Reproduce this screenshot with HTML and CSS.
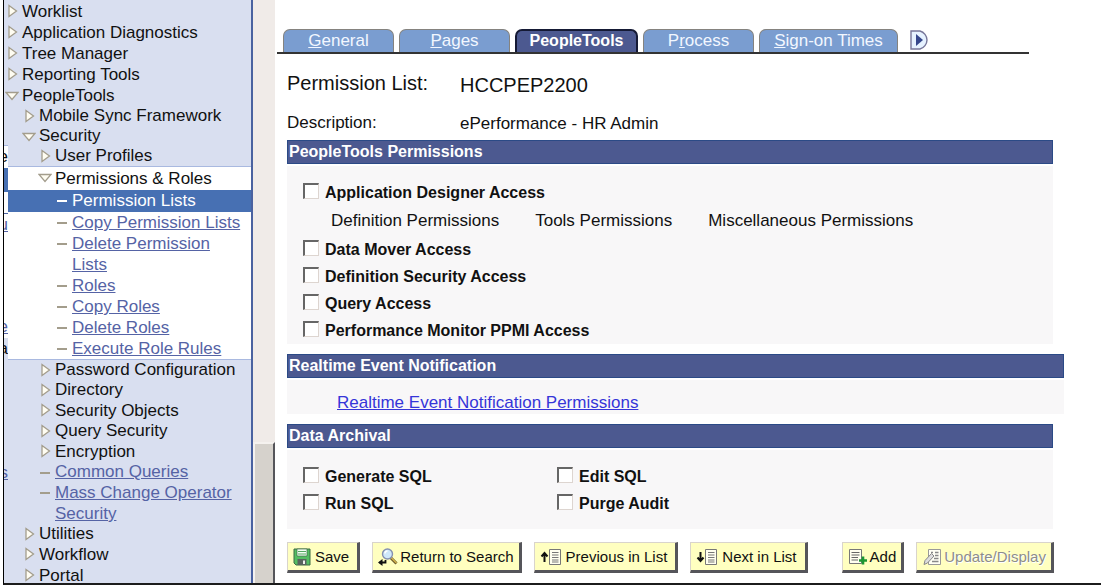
FILE: index.html
```html
<!DOCTYPE html>
<html lang="en">
<head>
    <meta charset="UTF-8">
    <meta name="viewport" content="width=device-width, initial-scale=1.0">
    <title>Permission Lists</title>
    <link rel="stylesheet" href="styles.css">
</head>
<body>
    <svg class="defs" aria-hidden="true">
        <symbol id="closed" viewBox="0 0 10 14">
            <path d="M1 1.5V12.5L8.5 7Z" fill="#fffdf2" stroke="#a39d8c" stroke-width="1.3"/>
        </symbol>
        <symbol id="open" viewBox="0 0 14 10">
            <path d="M1 1.5H13L7 8.5Z" fill="#fffdf2" stroke="#a39d8c" stroke-width="1.3"/>
        </symbol>
    </svg>
    <div id="frame">
        <div id="sidebar">
            <div id="strip" aria-hidden="true">
                <div class="s-top"></div>
                <div class="s-white">e</div>
                <div class="s-blue"></div>
                <div class="s-white s-line"></div>
                <div class="s-link">u</div>
                <div class="s-link s-gap">e</div>
                <div class="s-text">a</div>
                <div class="s-low">s</div>
            </div>
            <nav id="menu">
                <ul class="lvl1">
                    <li><span class="row"><svg class="closed"><use href="#closed"/></svg>Worklist</span></li>
                    <li><span class="row"><svg class="closed"><use href="#closed"/></svg>Application Diagnostics</span></li>
                    <li><span class="row"><svg class="closed"><use href="#closed"/></svg>Tree Manager</span></li>
                    <li><span class="row"><svg class="closed"><use href="#closed"/></svg>Reporting Tools</span></li>
                    <li><span class="row"><svg class="open"><use href="#open"/></svg>PeopleTools</span>
                        <ul class="lvl2">
                            <li><span class="row short"><svg class="closed"><use href="#closed"/></svg>Mobile Sync Framework</span></li>
                            <li><span class="row short"><svg class="open"><use href="#open"/></svg>Security</span>
                                <ul class="lvl3">
                                    <li><span class="row short"><svg class="closed"><use href="#closed"/></svg>User Profiles</span></li>
                                    <li class="opened"><span class="row head"><svg class="open"><use href="#open"/></svg>Permissions &amp; Roles</span>
                                        <ul class="lvl4">
                                            <li><span class="row dash selected">Permission Lists</span></li>
                                            <li><span class="row dash"><a href="#">Copy Permission Lists</a></span></li>
                                            <li><span class="row dash"><a href="#">Delete Permission<br>Lists</a></span></li>
                                            <li><span class="row dash"><a href="#">Roles</a></span></li>
                                            <li><span class="row dash"><a href="#">Copy Roles</a></span></li>
                                            <li><span class="row dash"><a href="#">Delete Roles</a></span></li>
                                            <li><span class="row dash"><a href="#">Execute Role Rules</a></span></li>
                                        </ul>
                                    </li>
                                    <li><span class="row short"><svg class="closed"><use href="#closed"/></svg>Password Configuration</span></li>
                                    <li><span class="row short"><svg class="closed"><use href="#closed"/></svg>Directory</span></li>
                                    <li><span class="row"><svg class="closed"><use href="#closed"/></svg>Security Objects</span></li>
                                    <li><span class="row short"><svg class="closed"><use href="#closed"/></svg>Query Security</span></li>
                                    <li><span class="row"><svg class="closed"><use href="#closed"/></svg>Encryption</span></li>
                                    <li><span class="row short dash"><a href="#">Common Queries</a></span></li>
                                    <li><span class="row dash"><a href="#">Mass Change Operator<br>Security</a></span></li>
                                </ul>
                            </li>
                            <li><span class="row short"><svg class="closed"><use href="#closed"/></svg>Utilities</span></li>
                            <li><span class="row"><svg class="closed"><use href="#closed"/></svg>Workflow</span></li>
                            <li><span class="row"><svg class="closed"><use href="#closed"/></svg>Portal</span></li>
                        </ul>
                    </li>
                </ul>
            </nav>
        </div>
        <div id="scroll" aria-hidden="true">
            <div class="track"></div>
            <div class="thumb"></div>
        </div>
        <main id="content">
            <nav id="tabs">
                <a href="#" class="tab"><u>G</u>eneral</a>
                <a href="#" class="tab"><u>P</u>ages</a>
                <a href="#" class="tab active">PeopleTools</a>
                <a href="#" class="tab">P<u>r</u>ocess</a>
                <a href="#" class="tab wide"><u>S</u>ign-on Times</a>
                <a href="#" class="next" aria-label="Next tabs">
                    <svg width="18" height="20" viewBox="0 0 18 20">
                        <path d="M1 1H10C14 2 17 6 17 10S14 18 10 19H1Z" fill="#e6f2ff" stroke="#77779a" stroke-width="1.4"/>
                        <path d="M6 4V16L13 10Z" fill="#35478c"/>
                    </svg>
                </a>
            </nav>
            <dl id="info">
                <dt class="big">Permission List:</dt>
                <dd class="big">HCCPEP2200</dd>
                <dt>Description:</dt>
                <dd>ePerformance - HR Admin</dd>
            </dl>
            <section class="group">
                <h2>PeopleTools Permissions</h2>
                <div class="body">
                    <label><input type="checkbox">Application Designer Access</label>
                    <div class="sub">
                        <span>Definition Permissions</span>
                        <span>Tools Permissions</span>
                        <span>Miscellaneous Permissions</span>
                    </div>
                    <label><input type="checkbox">Data Mover Access</label>
                    <label><input type="checkbox">Definition Security Access</label>
                    <label><input type="checkbox">Query Access</label>
                    <label><input type="checkbox">Performance Monitor PPMI Access</label>
                </div>
            </section>
            <section class="group event">
                <h2>Realtime Event Notification</h2>
                <div class="body">
                    <a href="#">Realtime Event Notification Permissions</a>
                </div>
            </section>
            <section class="group archive">
                <h2>Data Archival</h2>
                <div class="body">
                    <label><input type="checkbox">Generate SQL</label>
                    <label><input type="checkbox">Edit SQL</label>
                    <label><input type="checkbox">Run SQL</label>
                    <label><input type="checkbox">Purge Audit</label>
                </div>
            </section>
            <div id="buttons">
                <button type="button" class="roomy">
                    <svg width="18" height="18" viewBox="0 0 18 18">
                        <path d="M1 1H17V17H3L1 15Z" fill="#54bd62" stroke="#3c6b45"/>
                        <path d="M4 1H14V8H4Z" fill="#f4fff4" stroke="#3c6b45" stroke-width=".7"/>
                        <path d="M5 3.5H13M5 6H13" stroke="#54a860"/>
                        <path d="M4.500 11H13.500V17H4.500Z" fill="#59625e"/>
                        <path d="M10 12.500H12V16H10Z" fill="#eee"/>
                    </svg>
                    Save
                </button>
                <button type="button">
                    <svg width="20" height="18" viewBox="0 0 20 18">
                        <path d="M12.500 9.500L18.500 15.500" stroke="#6a5a2c" stroke-width="3"/>
                        <path d="M13 9.500L18.500 15" stroke="#d8b850" stroke-width="1.200"/>
                        <circle cx="9.500" cy="6" r="5" fill="#cfe8fb" stroke="#8590b0" stroke-width="1.400"/>
                        <path d="M7 5.500C7 4 8 3 9.500 3" fill="none" stroke="#fff" stroke-width="1.500"/>
                        <path d="M1.500 14.500H7.500V12" fill="none" stroke="#111" stroke-width="1.800"/>
                        <path d="M0 14.500L4.500 11V18Z" fill="#111"/>
                    </svg>
                    Return to Search
                </button>
                <button type="button" class="roomy">
                    <svg width="22" height="18" viewBox="0 0 22 18">
                        <path d="M4.500 14V5M1.500 8.500L4.500 5L7.500 8.500" fill="none" stroke="#111" stroke-width="2"/>
                        <path d="M9.500 1.500H20.500V16.500H9.500Z" fill="#fffff0" stroke="#777"/>
                        <path d="M12 4.500H18.500M12 7H18.500M12 9.500H18.500M12 12H18.500M12 14H18.500" stroke="#777"/>
                    </svg>
                    Previous in List
                </button>
                <button type="button" class="roomy">
                    <svg width="22" height="18" viewBox="0 0 22 18">
                        <path d="M4.500 4V13M1.500 9.500L4.500 13L7.500 9.500" fill="none" stroke="#111" stroke-width="2"/>
                        <path d="M9.500 1.500H20.500V16.500H9.500Z" fill="#fffff0" stroke="#777"/>
                        <path d="M12 4.500H18.500M12 7H18.500M12 9.500H18.500M12 12H18.500M12 14H18.500" stroke="#777"/>
                    </svg>
                    Next in List
                </button>
                <button type="button" class="add">
                    <svg width="20" height="18" viewBox="0 0 20 18">
                        <path d="M1.500 1.500H13.500V15.500H1.500Z" fill="#fffff0" stroke="#777"/>
                        <path d="M3.500 4.500H11.500M3.500 7H11.500M3.500 9.500H10M3.500 12H10" stroke="#666"/>
                        <path d="M15 8.500V16.500M11 12.500H19" stroke="#1c9632" stroke-width="2.600"/>
                    </svg>
                    Add
                </button>
                <button type="button" disabled>
                    <svg width="20" height="18" viewBox="0 0 20 18">
                        <path d="M6.500 1.500H18.500V16.500H6.500Z" fill="#fffff4" stroke="#999"/>
                        <path d="M9 4.500H11M13 4.500H16.500M9 7.500H11M13 7.500H16.500M12 10.500H16.500M10 13.500H16.500" stroke="#888" stroke-width="1.400"/>
                        <path d="M2 16.500L3 12.500L9.500 5.500L12 8L5.500 15Z" fill="#ddd" stroke="#888"/>
                    </svg>
                    Update/Display
                </button>
            </div>
        </main>
    </div>
</body>
</html>
```
FILE: styles.css
```css
*{
    box-sizing: border-box;
}
body{
    margin: 0 0 0 3px;
    height: 100vh;
    background-color: #fff;
    color: #111;
    font-family: "Liberation Sans", Arial, sans-serif;
    font-size: 17px;
    overflow: hidden;
}
ul, dl, dd, h2{
    margin: 0;
    padding: 0;
    list-style: none;
}
.defs{
    display: none;
}
#frame{
    display: flex;
    height: calc(100vh - 1px);
    border-left: 1px solid #000;
    border-bottom: 2px solid #1c1c1c;
}
#sidebar{
    display: flex;
    flex: none;
    border-right: 2px solid #4a62a0;
    background-color: #d9dff0;
    overflow: hidden;
}
/* page that shows through beside the menu */
#strip{
    display: flex;
    flex-direction: column;
    width: 4px;
    overflow: hidden;
}
#strip>div{
    display: flex;
    flex: none;
    justify-content: flex-end;
    background-color: #fff;
    line-height: 22px;
}
#strip>.s-top{
    height: 146px;
    background-color: #d9dff0;
    border-bottom: 1px solid #a9b9e0;
}
#strip>.s-white{
    height: 22px;
}
#strip>.s-blue{
    height: 24px;
    background-color: #4770b3;
}
#strip>.s-line{
    border-bottom: 1px solid #4a62a0;
}
#strip>.s-link{
    height: 102px;
    color: #5563a5;
    text-decoration: underline;
}
#strip>.s-gap{
    height: 22px;
}
#strip>.s-text{
    height: 124px;
    background-color: #d9dff0;
}
#strip>.s-low{
    height: 120px;
    background-color: #d9dff0;
    color: #5563a5;
    text-decoration: underline;
}
#menu{
    width: 243px;
    padding-top: 1px;
}
.row{
    display: flex;
    line-height: 21px;
    white-space: nowrap;
}
.row svg{
    flex: none;
}
.row.short{
    line-height: 20px;
}
.row.head{
    line-height: 23px;
}
svg.closed{
    width: 10px;
    height: 14px;
    margin: 3px 4px 0 0;
}
svg.open{
    width: 14px;
    height: 10px;
    margin: 6px 3px 0 -3px;
}
.lvl2 .row{
    padding-left: 17px;
}
.lvl3 .row{
    padding-left: 33px;
}
.lvl4 .row{
    padding-left: 50px;
}
.dash::before{
    content: "";
    flex: none;
    width: 10px;
    height: 2px;
    margin: 10px 5px 0 -1px;
    background-color: #a39d8c;
}
.row a{
    color: #5563a5;
}
.opened{
    background-color: #fff;
    border-top: 1px solid #a9b9e0;
    border-bottom: 1px solid #a9b9e0;
}
.row.selected{
    line-height: 22px;
    background-color: #4770b3;
    color: #fff;
}
.selected::before{
    background-color: #fff;
}
#scroll{
    display: flex;
    flex-direction: column;
    flex: none;
    width: 22px;
    background-color: #f0ebe8;
}
.track{
    flex: 76;
}
.thumb{
    flex: 24;
    border: 2px solid #f5f2ef;
    border-right-color: #55555a;
    border-bottom: 0;
    background-color: #d6d2cc;
}
#content{
    flex: 1;
    min-width: 0;
    padding: 29px 0 0 12px;
}
#tabs{
    display: flex;
    gap: 5px;
    margin: 0 72px 0 -10px;
    padding-left: 6px;
    border-bottom: 2px solid #333;
}
.tab{
    min-width: 111px;
    height: 23px;
    padding: 0 12px;
    border: 1px solid #85837f;
    border-bottom: 0;
    border-radius: 7px 7px 0 0;
    background-color: #7a9dd0;
    color: #f2f7ff;
    line-height: 22px;
    text-align: center;
    text-decoration: none;
    white-space: nowrap;
}
.tab.active{
    min-width: 123px;
    padding: 0 10px;
    border: 2px solid #151a35;
    border-bottom: 0;
    background-color: #4c5990;
    color: #fff;
    font-size: 16px;
    font-weight: bold;
    line-height: 20px;
}
.tab.wide{
    min-width: 139px;
}
.next{
    margin-left: 7px;
}
.next svg{
    display: block;
    margin-top: 1px;
}
#info{
    display: grid;
    grid-template-columns: 173px 1fr;
    margin-top: 16px;
    line-height: 24px;
}
#info dt{
    line-height: 22px;
}
#info .big{
    margin-bottom: 12px;
    font-size: 20px;
    line-height: 30px;
}
#info dt.big{
    line-height: 26px;
}
.group{
    margin: 4px 48px 10px 0;
}
.group h2{
    height: 24px;
    margin-bottom: 2px;
    padding-left: 1px;
    border: 1px solid #2b4a86;
    background-color: #4c5990;
    color: #fff;
    font-size: 16px;
    line-height: 22px;
}
.group .body{
    padding: 13px 16px 0;
    background-color: #f8f7f8;
}
.group label{
    display: flex;
    gap: 6px;
    font-size: 16px;
    font-weight: bold;
    line-height: 27px;
}
.group input{
    appearance: none;
    flex: none;
    width: 16px;
    height: 16px;
    margin: 4px 0 0;
    border: 2px solid #666;
    border-right: 1px solid #ddd5d0;
    border-bottom: 1px solid #ddd5d0;
    background-color: #fff;
}
.sub{
    display: flex;
    gap: 36px;
    padding-left: 28px;
    line-height: 30px;
    white-space: nowrap;
}
.group.event{
    margin-right: 37px;
}
.event .body{
    padding: 13px 50px 1px;
    line-height: 20px;
}
.event a{
    color: #3535d8;
}
.archive .body{
    display: grid;
    grid-template-columns: 254px 1fr;
    padding-bottom: 12px;
}
#buttons{
    display: flex;
    gap: 12px;
    margin-top: 13px;
}
#buttons button{
    display: flex;
    align-items: center;
    gap: 2px;
    height: 31px;
    padding: 0 5px;
    border: 1px solid #d9d4cc;
    border-right: 3px solid #55555a;
    border-bottom: 3px solid #55555a;
    background-color: #ffffc0;
    color: #111;
    font-family: inherit;
    font-size: 15px;
    white-space: nowrap;
}
#buttons .roomy{
    gap: 4px;
    padding-right: 8px;
}
#buttons .add{
    margin-left: 22px;
}
#buttons button:disabled{
    color: #8c8c8c;
    text-shadow: 1px 1px 0 #fff;
}
```
